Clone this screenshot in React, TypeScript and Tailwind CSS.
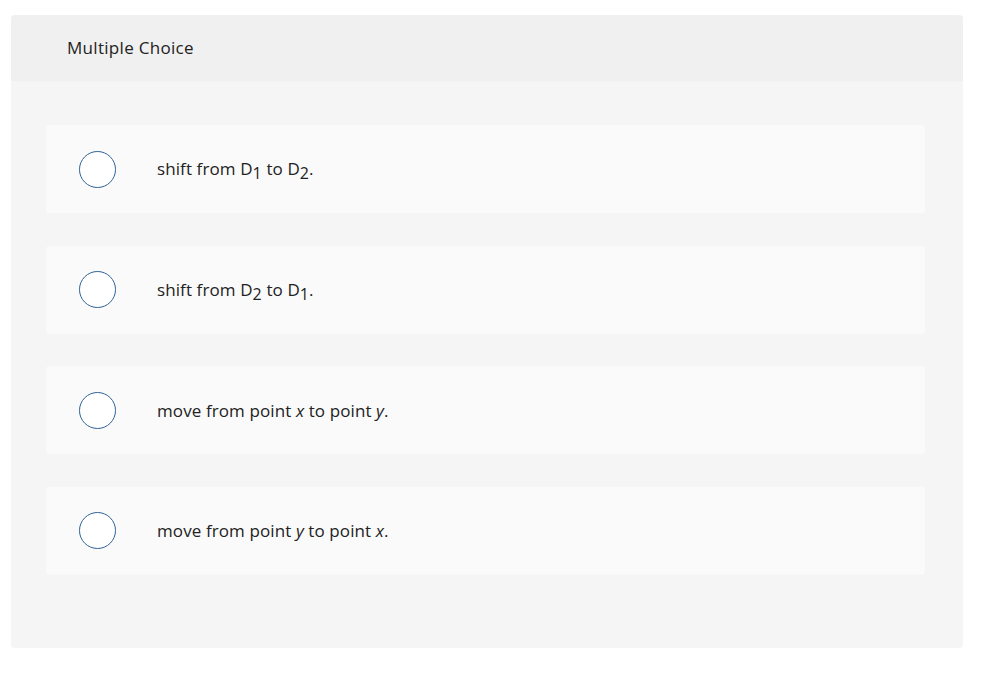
const Sub = ({ children }: { children: React.ReactNode }) => (
  <span className="align-[-4px] text-[16px] leading-none">{children}</span>
);

const options = [
  { id: 'a', label: (<>shift from D<Sub>1</Sub> to D<Sub>2</Sub>.</>) },
  { id: 'b', label: (<>shift from D<Sub>2</Sub> to D<Sub>1</Sub>.</>) },
  { id: 'c', label: (<>move from point <i>x</i> to point <i>y</i>.</>) },
  { id: 'd', label: (<>move from point <i>y</i> to point <i>x</i>.</>) },
];

export default function App() {
  return (
    <div className="min-h-[680px] bg-white pt-[15px] pl-[11px] pr-[41px] font-['Open_Sans',sans-serif] text-[#222]">
      <div className="rounded-[4px] bg-[#f5f5f5] overflow-hidden">
        <div className="flex h-[66px] items-center bg-[#f0f0f0] pl-[56px] pb-[1px] text-[17px] tracking-[0.3px]">Multiple Choice</div>
        <div className="flex flex-col gap-[32.67px] pl-[35px] pr-[38px] pt-[44px] pb-[73px]">
          {options.map((o) => (
            <div key={o.id} className="flex h-[88px] items-center rounded-[4px] bg-[#fafafa] pl-[33px]">
              <span className="h-[37px] w-[37px] shrink-0 rounded-full border border-[#2f6398] bg-white" />
              <span className="ml-[41px] text-[17px] tracking-[0.1px]">{o.label}</span>
            </div>
          ))}
        </div>
      </div>
    </div>
  );
}
